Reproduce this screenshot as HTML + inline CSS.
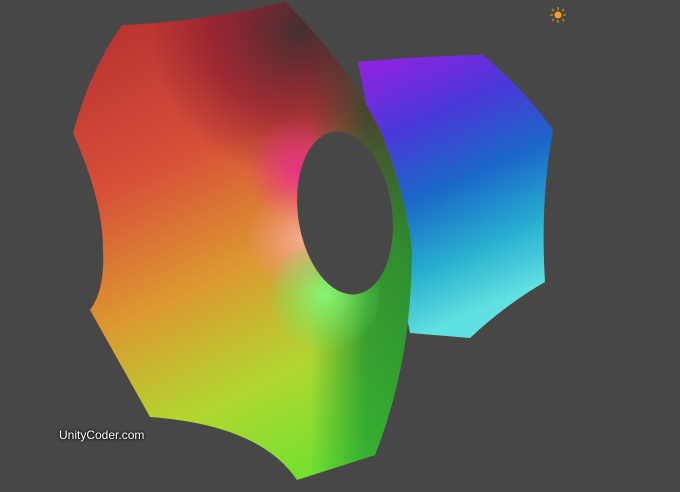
<!DOCTYPE html>
<html><head><style>
html,body{margin:0;padding:0;background:#474747;width:680px;height:492px;overflow:hidden}
.wm{position:absolute;left:59px;top:428px;font:12px "Liberation Sans",sans-serif;color:#fff;text-shadow:0 0 2px #000,0 0 3px #000}
</style></head><body>
<svg width="680" height="492" style="position:absolute;left:0;top:0">
<defs>
<linearGradient id="back" x1="0" y1="0" x2="0.3" y2="1">
<stop offset="0" stop-color="#9a20e0"/><stop offset="0.3" stop-color="#4a38d8"/>
<stop offset="0.55" stop-color="#1a68c8"/><stop offset="0.8" stop-color="#28b0d0"/><stop offset="1" stop-color="#60e0e0"/>
</linearGradient>
<linearGradient id="front" x1="0.1" y1="0" x2="0.75" y2="1">
<stop offset="0" stop-color="#b02a30"/><stop offset="0.3" stop-color="#d85038"/>
<stop offset="0.5" stop-color="#dc9a30"/><stop offset="0.68" stop-color="#b0d830"/><stop offset="0.85" stop-color="#70e030"/><stop offset="1" stop-color="#40c830"/>
</linearGradient>
<linearGradient id="rside" x1="0" y1="0" x2="0" y2="1">
<stop offset="0" stop-color="#3c3430"/><stop offset="0.25" stop-color="#3a4a30"/><stop offset="0.5" stop-color="#2a8a30"/><stop offset="1" stop-color="#30b030"/>
</linearGradient>
<radialGradient id="dark" cx="300" cy="30" r="150" gradientUnits="userSpaceOnUse">
<stop offset="0" stop-color="#3a3030" stop-opacity="0.95"/><stop offset="0.6" stop-color="#701030" stop-opacity="0.5"/><stop offset="1" stop-color="#701030" stop-opacity="0"/>
</radialGradient>
<radialGradient id="mag" cx="300" cy="170" r="55" gradientUnits="userSpaceOnUse">
<stop offset="0" stop-color="#f020a0" stop-opacity="0.8"/><stop offset="1" stop-color="#f020a0" stop-opacity="0"/>
</radialGradient>
<radialGradient id="glow" cx="300" cy="240" r="55" gradientUnits="userSpaceOnUse">
<stop offset="0" stop-color="#ffb0b0" stop-opacity="0.75"/><stop offset="1" stop-color="#ff80a0" stop-opacity="0"/>
</radialGradient>
<radialGradient id="glow3" cx="325" cy="295" r="60" gradientUnits="userSpaceOnUse">
<stop offset="0" stop-color="#80ff80" stop-opacity="0.9"/><stop offset="1" stop-color="#60f060" stop-opacity="0"/>
</radialGradient>
<linearGradient id="rfade" x1="0" y1="0" x2="1" y2="0">
<stop offset="0" stop-color="#fff" stop-opacity="0"/><stop offset="0.5" stop-color="#fff" stop-opacity="0.9"/><stop offset="1" stop-color="#fff" stop-opacity="1"/>
</linearGradient>
<mask id="rm"><rect x="310" y="0" width="110" height="492" fill="url(#rfade)"/></mask>
<clipPath id="fc"><path d="M122,25 Q200,22 285,2 Q345,60 380,130 Q405,190 412,250 Q412,360 375,455 L297,480 Q260,425 150,417 L90,310 Q105,290 103,250 Q103,200 73,133 Q90,70 122,25 Z"/></clipPath>
</defs>
<path d="M358,62 Q420,56 483,55 Q525,90 553,130 Q540,200 545,282 Q505,305 470,338 L410,333 Z" fill="url(#back)"/>
<g clip-path="url(#fc)">
<rect width="680" height="492" fill="url(#front)"/>
<circle cx="300" cy="30" r="150" fill="url(#dark)"/>
<circle cx="300" cy="170" r="55" fill="url(#mag)"/>
<circle cx="300" cy="240" r="55" fill="url(#glow)"/>
<rect x="310" y="0" width="110" height="492" fill="url(#rside)" mask="url(#rm)"/>
<circle cx="325" cy="295" r="55" fill="url(#glow3)"/>
</g>
<ellipse cx="345" cy="213" rx="47" ry="82" transform="rotate(-8 345 213)" fill="#474747"/>
<g transform="translate(558,15)" stroke="#c08020" stroke-width="1.5">
<line x1="-8" y1="0" x2="-5" y2="0"/><line x1="5" y1="0" x2="8" y2="0"/>
<line x1="0" y1="-8" x2="0" y2="-5"/><line x1="0" y1="5" x2="0" y2="8"/>
<line x1="-6" y1="-6" x2="-4" y2="-4"/><line x1="4" y1="4" x2="6" y2="6"/>
<line x1="-6" y1="6" x2="-4" y2="4"/><line x1="4" y1="-4" x2="6" y2="-6"/>
<circle r="3.5" fill="#f0a020" stroke="none"/>
</g>
</svg>
<div class="wm">UnityCoder.com</div>
</body></html>
